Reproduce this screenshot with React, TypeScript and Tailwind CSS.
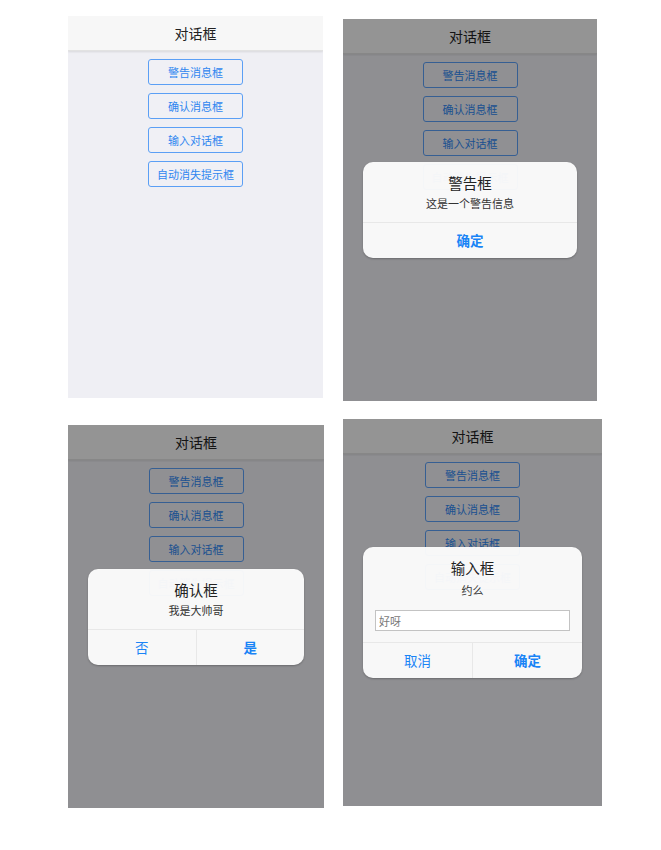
import type { ReactNode } from 'react';

const FONT = "font-['Microsoft_YaHei','Noto_Sans_CJK_SC',sans-serif]";

const buttons = ['警告消息框', '确认消息框', '输入对话框', '自动消失提示框'];

function Screen({ className, children }: { className: string; children?: ReactNode }) {
  return (
    <div className={`relative overflow-hidden bg-[#efeff4] ${className}`}>
      <div className="h-[35px] bg-[#f7f7f7] flex items-center justify-center text-[14px] text-[#222] shadow-[0_1px_2px_rgba(0,0,0,0.1)] border-b border-[#e2e2e2]">
        对话框
      </div>
      <div className="flex flex-col items-center gap-2 pt-2">
        {buttons.map((b) => (
          <button
            key={b}
            className="w-[95px] h-[26px] rounded-[3px] border border-[#5b9ff5] bg-[#f0f0f5] text-[11px] text-[#2f86f0] leading-none"
          >
            {b}
          </button>
        ))}
      </div>
      {children && (
        <div className="absolute inset-0 bg-[rgba(0,0,0,0.4)] flex items-center justify-center px-5">
          {children}
        </div>
      )}
    </div>
  );
}

function Dialog({ title, message, actions, input }: { title: string; message: string; actions: { label: string; bold?: boolean }[]; input?: string }) {
  return (
    <div className="w-full rounded-[10px] bg-[rgba(251,251,251,0.97)] shadow-[0_1px_2px_rgba(0,0,0,0.25)] overflow-hidden">
      <div className="flex flex-col items-center pt-[11px] pb-[11px]">
        <div className="text-[14.5px] text-[#222] leading-[20px]">{title}</div>
        <div className={`text-[11px] text-[#333] leading-[16px] ${input ? 'mt-[4px]' : 'mt-[2px]'}`}>{message}</div>
        {input && (
          <div className="w-full px-3 mt-[12px]">
            <input
              readOnly
              placeholder={input}
              className="block w-full h-[21px] bg-white border border-[#c3c3c3] px-[3px] text-[11px] outline-none placeholder:text-[#7a7a7a]"
            />
          </div>
        )}
      </div>
      <div className="flex border-t border-[#e8e8e8]">
        {actions.map((a, i) => (
          <div
            key={a.label}
            className={`flex-1 h-[35px] flex items-center justify-center text-[13.5px] text-[#1a84f6] ${a.bold ? 'font-bold' : ''} ${i > 0 ? 'border-l border-[#e8e8e8]' : ''}`}
          >
            {a.label}
          </div>
        ))}
      </div>
    </div>
  );
}

export default function App() {
  return (
    <div className={`w-[661px] h-[850px] bg-white ${FONT}`}>
      <div className="flex items-start pl-[68px]">
        <Screen className="w-[255px] h-[382px] mt-[16px]" />
        <Screen className="w-[254px] h-[382px] mt-[19px] ml-[20px]">
          <Dialog title="警告框" message="这是一个警告信息" actions={[{ label: '确定', bold: true }]} />
        </Screen>
      </div>
      <div className="flex items-start pl-[68px]">
        <Screen className="w-[256px] h-[383px] mt-[24px]">
          <Dialog title="确认框" message="我是大帅哥" actions={[{ label: '否' }, { label: '是', bold: true }]} />
        </Screen>
        <Screen className="w-[259px] h-[387px] mt-[18px] ml-[19px]">
          <Dialog title="输入框" message="约么" input="好呀" actions={[{ label: '取消' }, { label: '确定', bold: true }]} />
        </Screen>
      </div>
    </div>
  );
}
